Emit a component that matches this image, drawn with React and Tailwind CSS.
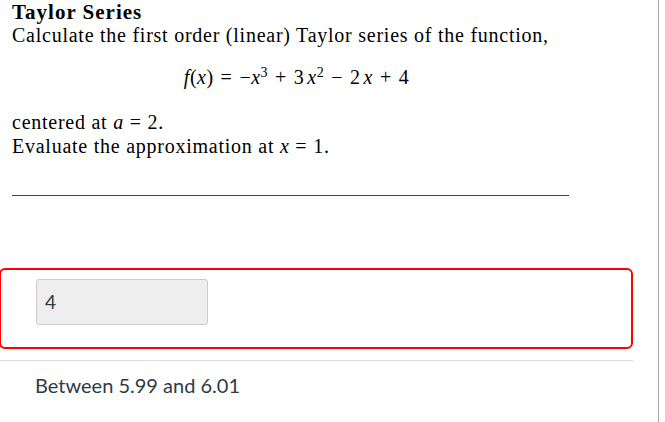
export default function App() {
  const serif = { fontFamily: '"Liberation Serif", "DejaVu Serif", serif' }
  const lato = { fontFamily: 'Lato, sans-serif' }
  return (
    <div className="w-[665px] h-[422px] bg-white overflow-hidden">
      <div className="w-[659px] h-[422px] border-r border-[#aaa]">
        <div className="px-3 pt-[1px] text-black" style={serif}>
          <div className="text-[21px] font-bold leading-[22px] tracking-[1px]">Taylor Series</div>
          <div className="text-[20px] leading-[24px] tracking-[0.75px]">
            Calculate the first order (linear) Taylor series of the function,
          </div>
          <div className="w-[557px] flex justify-center items-baseline text-[20px] leading-[24px] mt-[18px] tracking-[0.5px] pl-[12px]">
            <span><i>f</i>(<i>x</i>)</span>
            <span className="mx-[7px]">=</span>
            <span>−<i>x</i><sup className="text-[14px]">3</sup></span>
            <span className="mx-[7px]">+</span>
            <span>3<i className="ml-[3px]">x</i><sup className="text-[14px]">2</sup></span>
            <span className="mx-[7px]">−</span>
            <span>2<i className="ml-[3px]">x</i></span>
            <span className="mx-[7px]">+</span>
            <span>4</span>
          </div>
          <div className="text-[20px] leading-[24px] mt-[21px] tracking-[0.75px]">
            centered at <i>a</i> = 2.
          </div>
          <div className="text-[20px] leading-[24px] tracking-[0.75px]">
            Evaluate the approximation at <i>x</i> = 1.
          </div>
          <div className="w-[557px] h-px bg-[#444] mt-[37px]" />
        </div>
        <div className="mt-[72px] -ml-[1px] w-[634px] h-[81px] border-2 border-[#f00] rounded-md pl-[35px] pt-[9px]">
          <div className="w-[172px] h-[46px] bg-[#eee] border border-[#ccc] rounded-[3px] flex items-center pl-[8px] text-[19px] text-[#2d3b45]" style={lato}>
            4
          </div>
        </div>
        <div className="mt-[11px] w-[633px] h-px bg-[#ddd]" />
        <div className="pl-[35px] pt-[9px] text-[20px] text-[#2d3b45]" style={lato}>
          Between 5.99 and 6.01
        </div>
      </div>
    </div>
  )
}
